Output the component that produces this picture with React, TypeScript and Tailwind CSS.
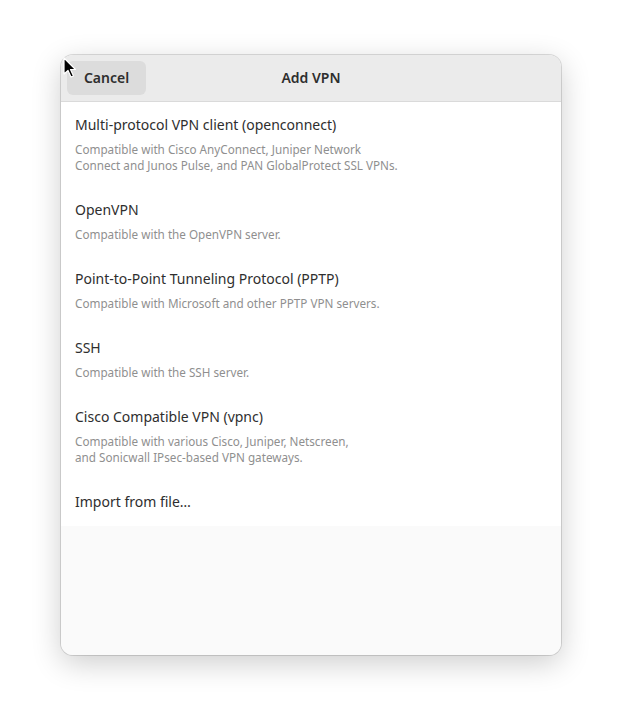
import React from 'react';

interface VpnOption {
    title: string;
    lines: string[];
}

const options: VpnOption[] = [
    {
        title: 'Multi-protocol VPN client (openconnect)',
        lines: [
            'Compatible with Cisco AnyConnect, Juniper Network',
            'Connect and Junos Pulse, and PAN GlobalProtect SSL VPNs.'
        ]
    },
    { title: 'OpenVPN', lines: ['Compatible with the OpenVPN server.'] },
    {
        title: 'Point-to-Point Tunneling Protocol (PPTP)',
        lines: ['Compatible with Microsoft and other PPTP VPN servers.']
    },
    { title: 'SSH', lines: ['Compatible with the SSH server.'] },
    {
        title: 'Cisco Compatible VPN (vpnc)',
        lines: [
            'Compatible with various Cisco, Juniper, Netscreen,',
            'and Sonicwall IPsec-based VPN gateways.'
        ]
    },
    { title: 'Import from file…', lines: [] }
];

const Cursor: React.FC = () => (
    <svg
        className="absolute left-[63px] top-[57px]"
        width="14"
        height="22"
        viewBox="0 0 14 22"
    >
        <path
            d="M1 1 L1 17 L5 13.5 L8 20 L10.5 19 L7.5 12.5 L12.5 12.5 Z"
            fill="#000"
            stroke="#fff"
            strokeWidth="1.2"
            strokeLinejoin="round"
        />
    </svg>
);

const App: React.FC = () => {
    return (
        <div
            className="relative w-[622px] h-[722px] bg-white pt-[55px] pl-[61px]"
            style={{ fontFamily: '"Noto Sans", "Open Sans", sans-serif' }}
        >
            <div className="w-[500px] h-[600px] rounded-[12px] overflow-hidden bg-[#fafafa] flex flex-col shadow-[0_0_0_1px_rgba(0,0,0,0.13),0_8px_30px_rgba(0,0,0,0.2)]">
                {/* Header bar */}
                <div className="relative h-[47px] shrink-0 bg-[#ebebeb] border-b border-[#dadada] flex items-center px-[6px]">
                    <button
                        type="button"
                        className="h-[34px] w-[79px] rounded-[6px] bg-[#dcdcdc] text-[14px] font-semibold text-[#2e2e2e] -mt-px"
                    >
                        Cancel
                    </button>
                    <div className="absolute inset-0 -top-px flex items-center justify-center pointer-events-none text-[14px] font-semibold text-[#2e2e2e]">
                        Add VPN
                    </div>
                </div>

                {/* Options list */}
                <div className="bg-white">
                    {options.map((opt) => (
                        <div key={opt.title} className="pl-[14px] pr-3 pt-[13px] pb-[14px]">
                            <div className="text-[14px] leading-[20px] text-[#2e2e2e]">
                                {opt.title}
                            </div>
                            {opt.lines.length > 0 && (
                                <div className="mt-[6px] text-[11.7px] leading-[16px] text-[#8f8f8f]">
                                    {opt.lines.map((line) => (
                                        <div key={line}>{line}</div>
                                    ))}
                                </div>
                            )}
                        </div>
                    ))}
                </div>
                <div className="flex-1 bg-[#fafafa]" />
            </div>
            <Cursor />
        </div>
    );
};

export default App;
